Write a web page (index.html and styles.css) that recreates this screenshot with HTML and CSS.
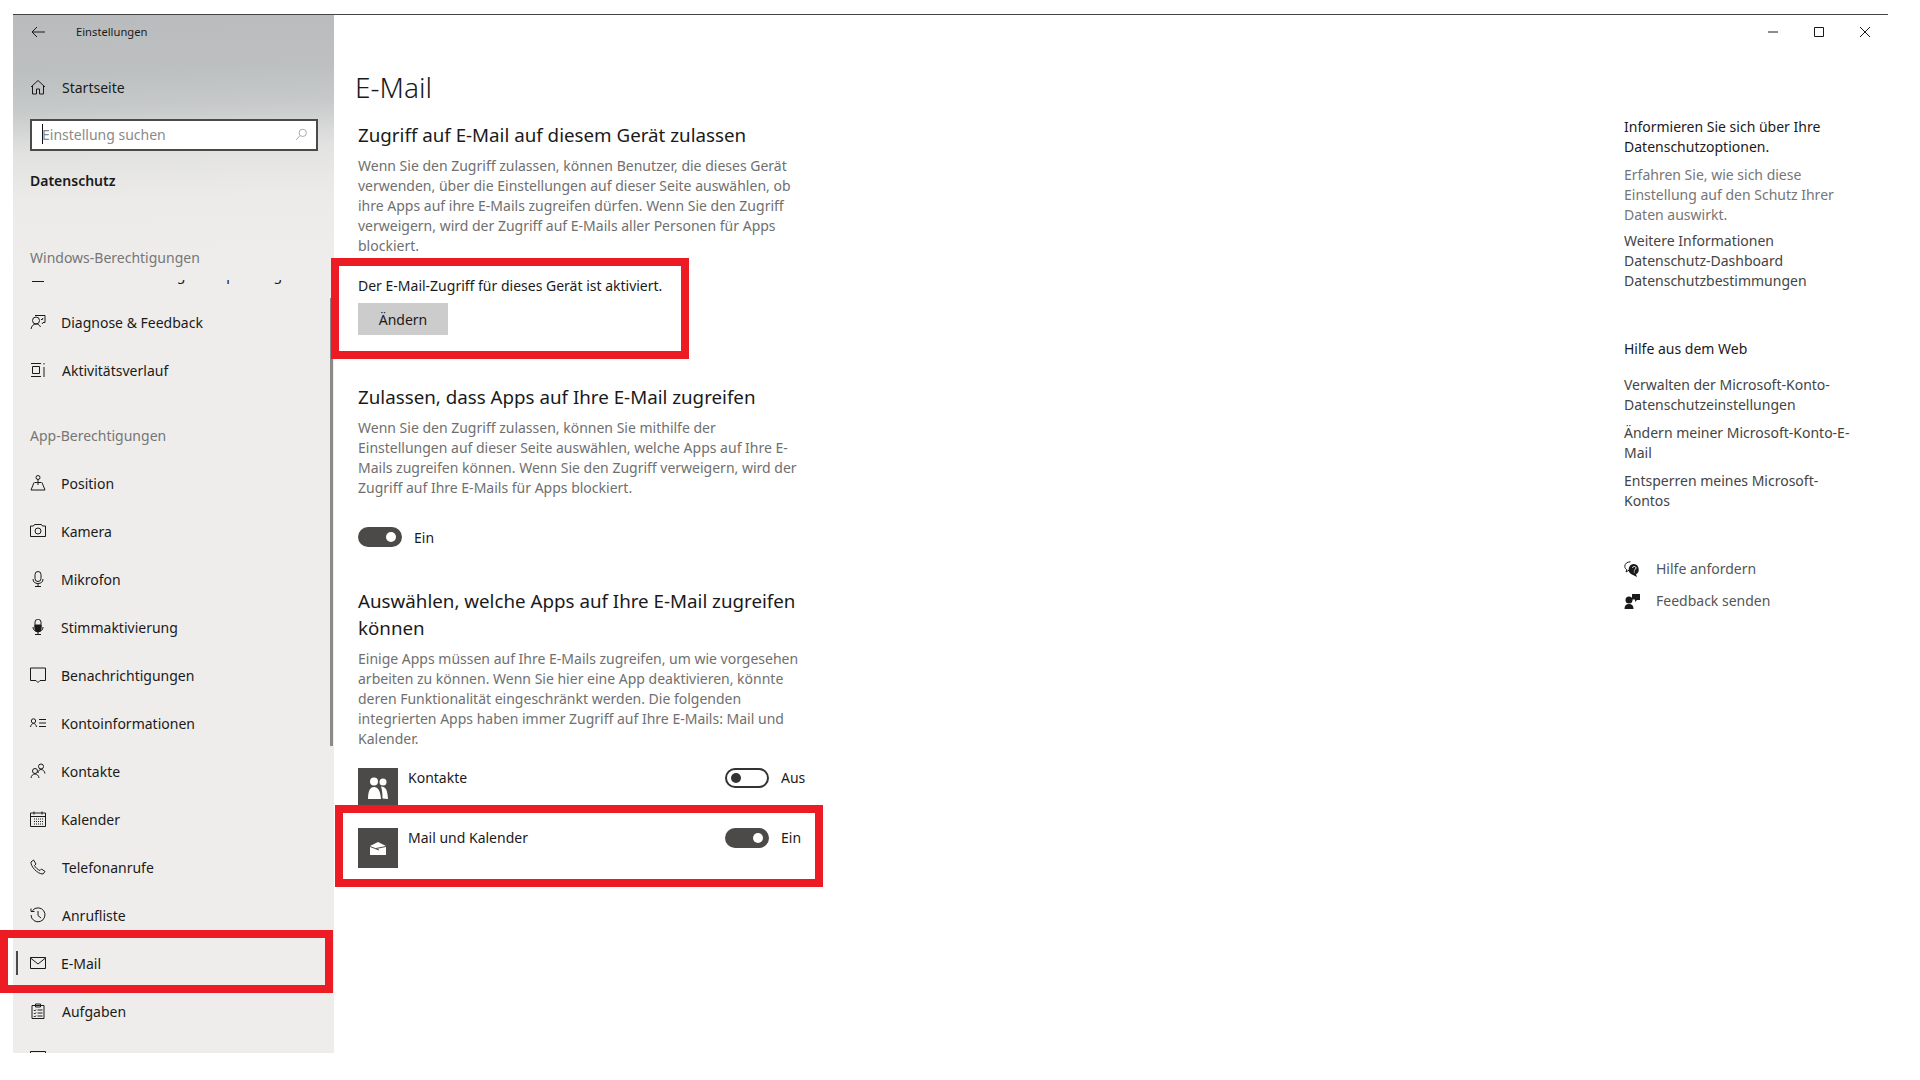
FILE: index.html
```html
<!doctype html>
<html lang="de">
<head>
	<title>Einstellungen - E-Mail</title>
	<meta charset="utf-8">
	<link rel="stylesheet" href="styles.css">
</head>
<body>
<div class="window">

	<!-- Seitenleiste -->
	<div class="sidebar">
		<div class="app_head">
			<svg class="ico" viewBox="0 0 16 16"><path d="M2 8h13M7 3L2 8l5 5"/></svg>
			<span>Einstellungen</span>
		</div>
		<div class="row home nudge">
			<svg class="ico" viewBox="0 0 16 16"><path d="M1 8l7-6.500L15 8M2.500 7v8h4v-5h3v5h4V7"/></svg>
			<span>Startseite</span>
		</div>
		<div class="search">
			<i class="caret"></i>
			<span>Einstellung suchen</span>
			<svg class="ico search_ico" viewBox="0 0 16 16"><circle cx="9.500" cy="6" r="4.500"/><path d="M6 9.500L1.500 14.500"/></svg>
		</div>
		<div class="cat_title">Datenschutz</div>
		<div class="group_title first">Windows-Berechtigungen</div>

		<div class="clip_strip">
			<div class="row">
				<svg class="ico" viewBox="0 0 16 16"><path d="M2 15.500h12"/></svg>
				<span>Freihand- und Eingabeanpassung</span>
			</div>
		</div>
		<div class="row">
			<svg class="ico" viewBox="0 0 16 16"><circle cx="6" cy="6.500" r="3.500"/><path d="M1 15c.5-3 2.500-5 5-5s3.500 1 4.500 3M5 1.500h10v7h-2l-1 1.500M13 4l-1 2-1-1"/></svg>
			<span>Diagnose &amp; Feedback</span>
		</div>
		<div class="row nudge">
			<svg class="ico" viewBox="0 0 16 16"><path d="M1 1.500h10M1 14.500h10M2.500 4.500h7v7h-7zM14 1v1.500M14 5v10"/></svg>
			<span>Aktivitätsverlauf</span>
		</div>

		<div class="group_title second">App-Berechtigungen</div>
		<div class="row">
			<svg class="ico" viewBox="0 0 16 16"><circle cx="8" cy="2.500" r="2"/><path d="M8 4.500V10M4.500 7.500h7M4 7.500L1 15h14l-3-7.500"/></svg>
			<span>Position</span>
		</div>
		<div class="row">
			<svg class="ico" viewBox="0 0 16 16"><path d="M.5 3h3l1-1.500h7l1 1.500h3v10.500H.5z"/><circle cx="8" cy="8" r="3"/></svg>
			<span>Kamera</span>
		</div>
		<div class="row">
			<svg class="ico" viewBox="0 0 16 16"><rect x="5" y=".5" width="6" height="10" rx="3"/><path d="M3 8c0 3 2 4.500 5 4.500s5-1.500 5-4.500M8 12.500v3M5 15.500h6"/></svg>
			<span>Mikrofon</span>
		</div>
		<div class="row">
			<svg class="ico" viewBox="0 0 16 16"><rect x="5" y=".5" width="6" height="10" rx="2.500"/><path class="solid" d="M5 6h6v4a3 3 0 0 1-6 0z"/><path d="M3 8c0 3 2 4.500 5 4.500s5-1.500 5-4.500M8 12.500v3M5 15.500h6"/></svg>
			<span>Stimmaktivierung</span>
		</div>
		<div class="row">
			<svg class="ico" viewBox="0 0 16 16"><path d="M.5 1h15v12.500H10l-2 2-2-2H.5z"/></svg>
			<span>Benachrichtigungen</span>
		</div>
		<div class="row">
			<svg class="ico" viewBox="0 0 16 16"><circle cx="3.500" cy="6" r="2.200"/><path d="M.5 12c.3-2 1.500-3.500 3-3.500s2.700 1.500 3 3.500M9 4.500h7M9 8h7M9 11.500h7"/></svg>
			<span>Kontoinformationen</span>
		</div>
		<div class="row">
			<svg class="ico" viewBox="0 0 16 16"><circle cx="5" cy="8" r="2.500"/><path d="M1 15c.3-2.500 2-4 4-4s3.700 1.500 4 4"/><circle cx="11" cy="3.500" r="2.500"/><path d="M8 10c.5-2.500 1.500-3.500 3-3.500 2 0 3.500 1.500 4 4"/></svg>
			<span>Kontakte</span>
		</div>
		<div class="row">
			<svg class="ico" viewBox="0 0 16 16"><path d="M.5 2h15v13.500H.5zM.5 5.500h15M4 .5v3M12 .5v3"/><path class="dots" d="M4 8h9M4 10.500h9M4 13h9"/></svg>
			<span>Kalender</span>
		</div>
		<div class="row nudge">
			<svg class="ico" viewBox="0 0 16 16"><path d="M3.500 1L1 3c-.5 4 6 12 12 12l2-2.500-3.500-2.500-1.500 1.500C8 11 5 8 4.500 6.500L6 5z"/></svg>
			<span>Telefonanrufe</span>
		</div>
		<div class="row nudge">
			<svg class="ico" viewBox="0 0 16 16"><path d="M2.500 3.500A7 7 0 1 1 1 8M1 1.500v3h3.500M8 4v4.500l3 2.500"/></svg>
			<span>Anrufliste</span>
		</div>
		<div class="row active">
			<svg class="ico" viewBox="0 0 16 16"><path d="M.5 2.500h15v11H.5zM.5 3L8 9l7.500-6"/></svg>
			<span>E-Mail</span>
		</div>
		<div class="row nudge">
			<svg class="ico" viewBox="0 0 16 16"><path d="M2 2.500h12v13H2zM5.500 1h5v3h-5zM7.500 7h5M7.500 10h5M7.500 13h5M3.800 7l1 1 1.200-1.500M3.800 10l1 1 1.200-1.500M3.800 13l1 1 1.200-1.500"/></svg>
			<span>Aufgaben</span>
		</div>
		<div class="row">
			<svg class="ico" viewBox="0 0 16 16"><path d="M.5 .5h15v15H.5z"/></svg>
		</div>

		<div class="scroll_thumb"></div>
	</div>

	<!-- Inhalt -->
	<div class="main">
		<div class="caption">
			<svg class="cap_ico" viewBox="0 0 10 10"><path d="M0 5h10"/></svg>
			<svg class="cap_ico" viewBox="0 0 10 10"><path d="M.5 .5h9v9h-9z"/></svg>
			<svg class="cap_ico" viewBox="0 0 10 10"><path d="M0 0l10 10M10 0L0 10"/></svg>
		</div>
		<div class="panes">
			<div class="content">
				<h1>E-Mail</h1>

				<h2>Zugriff auf E-Mail auf diesem Gerät zulassen</h2>
				<p class="desc">Wenn Sie den Zugriff zulassen, können Benutzer, die dieses Gerät<br>verwenden, über die Einstellungen auf dieser Seite auswählen, ob<br>ihre Apps auf ihre E-Mails zugreifen dürfen. Wenn Sie den Zugriff<br>verweigern, wird der Zugriff auf E-Mails aller Personen für Apps<br>blockiert.</p>
				<p class="status">Der E-Mail-Zugriff für dieses Gerät ist aktiviert.</p>
				<button class="btn" type="button">Ändern</button>

				<h2 class="sec2">Zulassen, dass Apps auf Ihre E-Mail zugreifen</h2>
				<p class="desc">Wenn Sie den Zugriff zulassen, können Sie mithilfe der<br>Einstellungen auf dieser Seite auswählen, welche Apps auf Ihre E-<br>Mails zugreifen können. Wenn Sie den Zugriff verweigern, wird der<br>Zugriff auf Ihre E-Mails für Apps blockiert.</p>
				<div class="switch_row">
					<i class="switch on"></i>
					<span>Ein</span>
				</div>

				<h2 class="sec3">Auswählen, welche Apps auf Ihre E-Mail zugreifen<br>können</h2>
				<p class="desc">Einige Apps müssen auf Ihre E-Mails zugreifen, um wie vorgesehen<br>arbeiten zu können. Wenn Sie hier eine App deaktivieren, könnte<br>deren Funktionalität eingeschränkt werden. Die folgenden<br>integrierten Apps haben immer Zugriff auf Ihre E-Mails: Mail und<br>Kalender.</p>

				<div class="app_list">
					<div class="app_row">
						<div class="tile">
							<svg class="people" viewBox="0 0 20 22"><circle cx="6" cy="4.500" r="4"/><circle cx="15" cy="5" r="3.500"/><path d="M0 22c0-8 2-12 6-12s6.500 4 7 12zM13 9.500c5 0 6.500 4 7 12.500l-5.500-.5c0-5-.5-9-1.500-12z"/></svg>
						</div>
						<span class="app_name">Kontakte</span>
						<i class="switch"></i>
						<span class="state">Aus</span>
					</div>
					<div class="app_row">
						<div class="tile">
							<svg class="envelope" viewBox="0 0 16 13"><path d="M0 4L8 0l8 4v9H0z"/><path class="fold" d="M0 4.500L9 8M16 4.500L6 6.500"/></svg>
						</div>
						<span class="app_name">Mail und Kalender</span>
						<i class="switch on"></i>
						<span class="state">Ein</span>
					</div>
				</div>
			</div>

			<div class="aside">
				<h3>Informieren Sie sich über Ihre<br>Datenschutzoptionen.</h3>
				<p class="aside_text">Erfahren Sie, wie sich diese<br>Einstellung auf den Schutz Ihrer<br>Daten auswirkt.</p>
				<div class="aside_links">
					<a>Weitere Informationen</a>
					<a>Datenschutz-Dashboard</a>
					<a>Datenschutzbestimmungen</a>
				</div>
				<h3 class="web_title">Hilfe aus dem Web</h3>
				<a class="web_link first_link">Verwalten der Microsoft-Konto-<br>Datenschutzeinstellungen</a>
				<a class="web_link">Ändern meiner Microsoft-Konto-E-<br>Mail</a>
				<a class="web_link">Entsperren meines Microsoft-<br>Kontos</a>
				<div class="help_row help_first">
					<svg viewBox="0 0 16 16"><path class="ol" d="M6.500 .8C3.200 .8.800 2.800.800 5.300c0 1.500.8 2.700 2 3.500L2 11l3-1.800"/><path d="M10 3a5.500 5.500 0 0 0-3 10l6 3-1-2.800A5.500 5.500 0 0 0 10 3z"/><path class="qm" d="M8.500 7c0-2 3.500-2 3.500 0 0 1.300-1.700 1.300-1.700 2.500M10.300 10.500v1"/></svg>
					<span>Hilfe anfordern</span>
				</div>
				<div class="help_row">
					<svg viewBox="0 0 16 16"><circle cx="5" cy="7" r="3.500"/><path d="M.5 16c0-3.500 1.500-5 4.500-5s4.500 1.500 4.500 5zM8 1h8v6h-3l-2 2V6.500H8z"/></svg>
					<span>Feedback senden</span>
				</div>
			</div>
		</div>
	</div>
</div>

<!-- Markierungen -->
<div class="mark mark_access"></div>
<div class="mark mark_mail_app"></div>
<div class="mark mark_mail_nav"></div>
</body>
</html>
```

FILE: styles.css
```css
html, body {
	margin: 0;
	height: 100%;
	overflow: hidden;
	background: #fff;
}
body {
	font-family: "Noto Sans", "Open Sans", sans-serif;
	font-size: 14px;
	color: #1a1a1a;
}

.window {
	position: relative;
	display: flex;
	margin: 14px 32px 0 13px;
	border-top: 1px solid #444;
	height: 1038px;
}

/* Seitenleiste */
.sidebar {
	position: relative;
	flex: 0 0 321px;
	height: 1038px;
	overflow: hidden;
	background: linear-gradient(178deg, #b9bbbd 0, #bdc0c1 60px, #c6c9c9 95px, #e2e2e1 140px, #ecebe9 190px, #eeedeb 260px);
}
.ico {
	flex: none;
	width: 16px;
	height: 16px;
	fill: none;
	stroke: #1a1a1a;
	stroke-width: 1;
}
.ico .solid { fill: #1a1a1a; }
.ico .dots { stroke-dasharray: 1 1; }

.app_head {
	display: flex;
	align-items: center;
	height: 33px;
	padding-left: 17px;
	font-size: 11.200px;
}
.app_head span { margin-left: 30px; }

.row {
	position: relative;
	display: flex;
	align-items: center;
	gap: 15px;
	height: 48px;
	padding-left: 17px;
	white-space: nowrap;
}
.nudge span { margin-left: 1px; }
.home { margin-top: 15px; }

.search {
	display: flex;
	align-items: center;
	margin: 8px 16px 0 17px;
	height: 26px;
	border: 2px solid #4c4a48;
	background: #fff;
	color: #8a8a8a;
	padding: 0 8px 2px 10px;
}
.caret {
	width: 1px;
	height: 20px;
	background: #111;
	margin-right: -1px;
}
.search_ico {
	width: 13px;
	height: 13px;
	margin-left: auto;
	stroke: #999;
}
.cat_title {
	margin: 20px 0 0 17px;
	line-height: 20px;
	font-weight: 600;
}
.group_title {
	margin-left: 17px;
	line-height: 20px;
	color: #767676;
}
.first { margin-top: 57px; }
.second { margin: 32px 0 13px 17px; }

/* nur die Unterlaengen der weggescrollten Zeile bleiben sichtbar */
.clip_strip {
	margin-top: 12px;
	height: 18px;
	overflow: hidden;
}
.clip_strip .row { margin-top: -30px; }

.active::before {
	content: "";
	position: absolute;
	left: 3px;
	top: 12px;
	width: 2px;
	height: 24px;
	background: #4c4a48;
}
.scroll_thumb {
	position: absolute;
	right: 1px;
	top: 283px;
	width: 3px;
	height: 448px;
	background: #8a8a8a;
}

/* Inhalt */
.main {
	flex: 1;
	display: flex;
	flex-direction: column;
}
.caption {
	display: flex;
	justify-content: flex-end;
	align-items: center;
	gap: 36px;
	height: 33px;
	padding-right: 18px;
}
.cap_ico {
	width: 10px;
	height: 10px;
	fill: none;
	stroke: #1a1a1a;
	stroke-width: 1;
}
.panes {
	display: flex;
	justify-content: space-between;
}
.content {
	padding-left: 24px;
}
h1 {
	margin: 19px 0 0 -3px;
	font-size: 28px;
	line-height: 40px;
	font-weight: 300;
}
h2 {
	margin: 14px 0 0;
	font-size: 18.750px;
	line-height: 27px;
	font-weight: 400;
	white-space: nowrap;
}
h2.sec2 { margin-top: 48px; }
h2.sec3 { margin-top: 40px; }
.desc {
	margin: 8px 0 0;
	line-height: 20px;
	color: #6f6f6f;
	white-space: nowrap;
}
.status {
	margin: 20px 0 0;
	line-height: 20px;
}
.btn {
	display: block;
	margin-top: 7px;
	width: 90px;
	height: 32px;
	border: 0;
	padding: 0;
	background: #ccc;
	font: inherit;
	color: #1a1a1a;
}
.switch_row {
	display: flex;
	align-items: center;
	gap: 12px;
	margin-top: 29px;
	height: 20px;
}
.switch {
	position: relative;
	flex: none;
	box-sizing: border-box;
	width: 44px;
	height: 20px;
	border: 2px solid #333;
	border-radius: 10px;
}
.switch::after {
	content: "";
	position: absolute;
	left: 4px;
	top: 3px;
	width: 10px;
	height: 10px;
	border-radius: 50%;
	background: #333;
}
.switch.on {
	background: #4c4a48;
	border-color: #4c4a48;
}
.switch.on::after {
	left: auto;
	right: 4px;
	background: #fff;
}
.app_list { margin-top: 19px; }
.app_row {
	display: flex;
	align-items: flex-start;
	height: 60px;
}
.tile {
	display: flex;
	align-items: center;
	justify-content: center;
	width: 40px;
	height: 40px;
	background: #4c4a48;
}
.tile svg { fill: #fff; }
.people {
	width: 20px;
	height: 22px;
}
.envelope {
	width: 16px;
	height: 13px;
}
.envelope .fold {
	fill: none;
	stroke: #4c4a48;
	stroke-width: 1;
}
.app_name {
	margin-left: 10px;
	width: 317px;
	line-height: 20px;
}
.state {
	margin-left: 12px;
	line-height: 20px;
}

/* rechte Spalte */
.aside {
	width: 264px;
	padding-top: 69px;
	line-height: 20px;
	white-space: nowrap;
}
h3 {
	margin: 0;
	font-size: inherit;
	font-weight: 400;
}
.aside_text {
	margin: 8px 0 0;
	color: #767676;
}
.aside_links {
	margin-top: 6px;
	color: #444;
}
.aside_links a { display: block; }
.web_title { margin-top: 48px; }
.web_link {
	display: block;
	margin-top: 8px;
	color: #444;
}
.first_link { margin-top: 16px; }
.help_row {
	display: flex;
	align-items: center;
	gap: 16px;
	margin-top: 12px;
	height: 20px;
	color: #555;
}
.help_first { margin-top: 48px; }
.help_row svg {
	width: 16px;
	height: 16px;
	fill: #1a1a1a;
}
.help_row .ol {
	fill: none;
	stroke: #1a1a1a;
}
.help_row .qm {
	fill: none;
	stroke: #fff;
}

/* rote Markierungen */
.mark {
	position: absolute;
	box-sizing: border-box;
	border: 8px solid #ed1c24;
}
.mark_access { left: 331px; top: 258px; width: 358px; height: 101px; }
.mark_mail_app { left: 335px; top: 805px; width: 488px; height: 82px; }
.mark_mail_nav { left: 0; top: 930px; width: 333px; height: 63px; }
```
